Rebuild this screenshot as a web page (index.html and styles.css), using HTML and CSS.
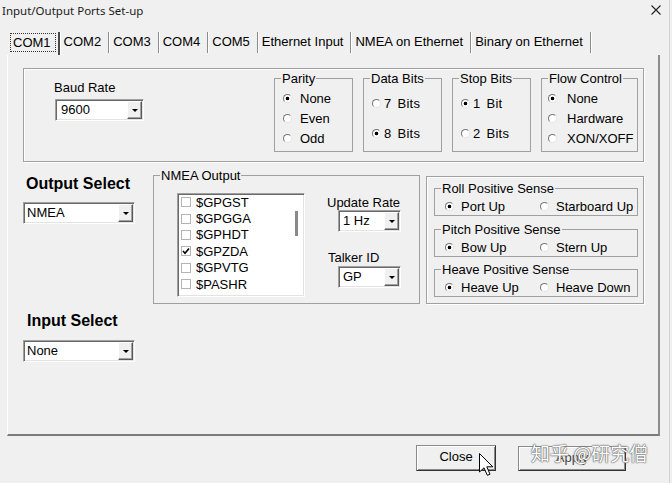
FILE: index.html
```html
<!DOCTYPE html>
<html>
<head>
<meta charset="utf-8">
<link rel="stylesheet" href="styles.css">
</head>
<body>
<div class="window">
  <div class="titlebar">
    <span class="title">Input/Output Ports Set-up</span>
    <svg class="xbtn" width="10" height="10" viewBox="0 0 10 10"><path d="M0.5 0.5 L9.5 9.5 M9.5 0.5 L0.5 9.5" stroke="#222" stroke-width="1.1" fill="none"/></svg>
  </div>

  <div class="tabs">
    <div class="tab sel"><span class="focus">COM1</span></div>
    <div class="tab">COM2</div>
    <div class="tab">COM3</div>
    <div class="tab">COM4</div>
    <div class="tab">COM5</div>
    <div class="tab">Ethernet Input</div>
    <div class="tab">NMEA on Ethernet</div>
    <div class="tab">Binary on Ethernet</div>
  </div>

  <div class="panel">
    <div class="group upper">
      <div class="baud">
        <div class="lbl">Baud Rate</div>
        <div class="combo baud-combo"><span class="val">9600</span><span class="dd"><span class="arrow"></span></span></div>
      </div>

      <fieldset class="fs parity">
        <legend>Parity</legend>
        <div class="radios">
          <div class="rb"><span class="radio on"></span>None</div>
          <div class="rb"><span class="radio"></span>Even</div>
          <div class="rb"><span class="radio"></span>Odd</div>
        </div>
      </fieldset>

      <fieldset class="fs databits">
        <legend>Data Bits</legend>
        <div class="radios two">
          <div class="rb"><span class="radio"></span>7 Bits</div>
          <div class="rb"><span class="radio on"></span>8 Bits</div>
        </div>
      </fieldset>

      <fieldset class="fs stopbits">
        <legend>Stop Bits</legend>
        <div class="radios two">
          <div class="rb"><span class="radio on"></span>1 Bit</div>
          <div class="rb"><span class="radio"></span>2 Bits</div>
        </div>
      </fieldset>

      <fieldset class="fs flow">
        <legend>Flow Control</legend>
        <div class="radios">
          <div class="rb"><span class="radio on"></span>None</div>
          <div class="rb"><span class="radio"></span>Hardware</div>
          <div class="rb"><span class="radio"></span>XON/XOFF</div>
        </div>
      </fieldset>
    </div>

    <div class="middle">
      <div class="leftcol">
        <div class="big out-lbl">Output Select</div>
        <div class="combo wide-combo"><span class="val">NMEA</span><span class="dd"><span class="arrow"></span></span></div>
        <div class="big in-lbl">Input Select</div>
        <div class="combo wide-combo in-combo"><span class="val">None</span><span class="dd"><span class="arrow"></span></span></div>
      </div>

      <fieldset class="fs nmea">
        <legend>NMEA Output</legend>
        <div class="nmea-body">
          <div class="listbox">
            <div class="items">
              <div class="item"><span class="cb"></span>$GPGST</div>
              <div class="item"><span class="cb"></span>$GPGGA</div>
              <div class="item"><span class="cb"></span>$GPHDT</div>
              <div class="item"><span class="cb"><svg width="8" height="8" viewBox="0 0 8 8"><path d="M1 4 L3 6.3 L7 1.5" stroke="#000" stroke-width="1.6" fill="none"/></svg></span>$GPZDA</div>
              <div class="item"><span class="cb"></span>$GPVTG</div>
              <div class="item"><span class="cb"></span>$PASHR</div>
              <div class="item"><span class="cb"></span>$PASHR_TSS</div>
            </div>
            <div class="scroll"><div class="thumb"></div></div>
          </div>
          <div class="nmea-right">
            <div class="lbl">Update Rate</div>
            <div class="combo small-combo"><span class="val">1 Hz</span><span class="dd"><span class="arrow"></span></span></div>
            <div class="lbl talker-lbl">Talker ID</div>
            <div class="combo small-combo talker-combo"><span class="val">GP</span><span class="dd"><span class="arrow"></span></span></div>
          </div>
        </div>
      </fieldset>

      <div class="group sense">
        <fieldset class="fs sfs">
          <legend>Roll Positive Sense</legend>
          <div class="row2">
            <div class="rb"><span class="radio on"></span>Port Up</div>
            <div class="rb"><span class="radio"></span>Starboard Up</div>
          </div>
        </fieldset>
        <fieldset class="fs sfs pitch">
          <legend>Pitch Positive Sense</legend>
          <div class="row2">
            <div class="rb"><span class="radio on"></span>Bow Up</div>
            <div class="rb"><span class="radio"></span>Stern Up</div>
          </div>
        </fieldset>
        <fieldset class="fs sfs heave">
          <legend>Heave Positive Sense</legend>
          <div class="row2">
            <div class="rb"><span class="radio on"></span>Heave Up</div>
            <div class="rb"><span class="radio"></span>Heave Down</div>
          </div>
        </fieldset>
      </div>
    </div>
  </div>

  <div class="buttons">
    <div class="btn close">Close</div>
    <div class="btn apply">Apply</div>
  </div>

  <div class="watermark">知乎 @研究僧</div>
  <svg class="cursor" width="15" height="24" viewBox="0 0 15 24"><path d="M0.5 0.5 L0.5 19 L5 14.8 L8.3 22.3 L11 21.2 L7.8 13.8 L13.8 13.8 Z" fill="#fff" stroke="#000" stroke-width="1"/></svg>
</div>
</body>
</html>
```

FILE: styles.css
```css
* { box-sizing: border-box; }
html, body { margin: 0; padding: 0; }
body {
  background: #f0f0f0;
  font-family: "Liberation Sans", Arial, sans-serif;
  font-size: 13px;
  color: #000;
}
.window {
  position: relative;
  width: 670px;
  height: 483px;
  overflow: hidden;
  background: #f0f0f0;
  border-right: 1px solid #d2d2d2;
}

/* title bar */
.titlebar {
  display: flex;
  justify-content: space-between;
  align-items: flex-start;
  height: 20px;
  padding: 3px 0 0 2px;
}
.title {
  font-family: "Noto Sans", sans-serif;
  font-size: 11.5px;
  line-height: 16px;
  color: #1b1b1b;
}
.xbtn { margin: 2px 8px 0 0; }

/* tabs */
.tabs {
  display: flex;
  align-items: flex-start;
  margin-top: 12px;
  height: 23px;
  padding-left: 9px;
}
.tab {
  height: 21px;
  line-height: 19px;
  padding: 0 7px 0 4px;
  border-right: 1px solid #8c8c8c;
  box-shadow: 1px 0 0 #fff;
  white-space: nowrap;
}
.tab.sel {
  height: 23px;
  padding: 1px 2px 0 1px;
  border-right: 2px solid #4a4a4a;
}
.focus {
  display: block;
  border: 1px dotted #333;
  padding: 0 4px 0 2px;
  line-height: 17px;
}

/* panel */
.panel {
  width: 653px;
  height: 381px;
  margin-left: 7px;
  border-left: 1px solid #fff;
  border-right: 2px solid #8c8c8c;
  border-bottom: 2px solid #7c7c7c;
  padding: 13px 0 0 15px;
}
.group {
  border: 1px solid #a0a0a0;
  box-shadow: inset 1px 1px 0 #fff, 1px 1px 0 #fff;
}
.upper {
  display: flex;
  align-items: flex-start;
  width: 621px;
  height: 94px;
}
.baud {
  width: 250px;
  flex: none;
  padding: 11px 0 0 30px;
}
.lbl { line-height: 15px; white-space: nowrap; }

/* fieldsets */
fieldset.fs {
  margin: 0;
  padding: 0;
  min-width: 0;
  border: 1px solid #a0a0a0;
  flex: none;
}
fieldset.fs legend {
  margin-left: 6px;
  padding: 0 1px;
  font-size: 13px;
  line-height: 13px;
  white-space: nowrap;
}
.upper fieldset.fs { margin-top: 3px; height: 80px; }
.upper fieldset.fs + fieldset.fs { margin-left: 10px; }
.parity, .databits, .stopbits { width: 79px; }
.flow { width: 97px; }

.radios { padding: 3px 0 0 8px; }
.radios.two { padding-top: 8px; display: flex; flex-direction: column; gap: 10px; }
.flow .radios { padding-left: 6px; }

.rb {
  display: flex;
  align-items: center;
  height: 20px;
  white-space: nowrap;
}
.radio {
  flex: none;
  width: 9px;
  height: 9px;
  border-radius: 50%;
  border: 1px solid;
  border-color: #777 #e4e4e4 #e4e4e4 #777;
  background: #fff;
  margin-right: 8px;
}
.radio.on { background: radial-gradient(circle, #000 0 1.6px, #fff 2.1px); }
.databits .radio, .stopbits .radio { margin-right: 3px; }
.databits .rb, .stopbits .rb { word-spacing: 2px; letter-spacing: 0.3px; }
.flow .radio { margin-right: 10px; }

/* combos */
.combo {
  display: flex;
  height: 22px;
  background: #fff;
  border: 1px solid;
  border-color: #a0a0a0 #fff #fff #a0a0a0;
  box-shadow: inset 1px 1px 0 #696969, inset -1px -1px 0 #e3e3e3;
  padding: 1px;
}
.combo .val {
  flex: 1;
  line-height: 18px;
  padding-left: 2px;
  white-space: nowrap;
}
.combo .dd {
  flex: none;
  width: 15px;
  background: #f0f0f0;
  border: 1px solid;
  border-color: #fff #5a5a5a #5a5a5a #fff;
  box-shadow: inset -1px -1px 0 #a0a0a0;
  display: flex;
  align-items: center;
  justify-content: center;
}
.arrow {
  width: 0;
  height: 0;
  border-left: 3px solid transparent;
  border-right: 3px solid transparent;
  border-top: 3px solid #000;
  margin-top: 1px;
}
.baud-combo { margin-top: 4px; margin-left: 1px; width: 89px; }
.baud-combo .val { padding-left: 4px; }

/* middle */
.middle {
  display: flex;
  align-items: flex-start;
  margin-top: 7px;
}
.leftcol {
  width: 112px;
  flex: none;
  padding-top: 7px;
  margin-right: 18px;
}
.big { font-weight: bold; font-size: 16px; line-height: 16px; white-space: nowrap; }
.out-lbl { padding-left: 3px; }
.in-lbl { padding-left: 4px; margin-top: 89px; }
.wide-combo { width: 112px; margin-top: 10px; }
.in-combo { margin-top: 11px; }

fieldset.nmea { width: 267px; height: 135px; }
.nmea-body { display: flex; align-items: flex-start; }
.listbox {
  display: flex;
  width: 128px;
  height: 104px;
  margin: 11px 0 0 23px;
  background: #fff;
  border: 1px solid;
  border-color: #a0a0a0 #fff #fff #a0a0a0;
  box-shadow: inset 1px 1px 0 #696969, inset -1px -1px 0 #e3e3e3;
  overflow: hidden;
}
.items { flex: 1; padding-left: 3px; overflow: hidden; }
.item {
  display: flex;
  align-items: center;
  height: 16.4px;
  white-space: nowrap;
}
.cb {
  flex: none;
  width: 10px;
  height: 10px;
  border: 1px solid #b4b4b4;
  background: #fff;
  margin-right: 5px;
  display: flex;
  align-items: center;
  justify-content: center;
}
.scroll { flex: none; width: 9px; padding-top: 17px; }
.thumb { width: 3px; height: 25px; background: #8a8a8a; }

.nmea-right { margin: 13px 0 0 22px; }
.small-combo { width: 63px; margin-left: 11px; }
.small-combo .val { padding-left: 3px; }
.talker-lbl { margin: 18px 0 0 1px; }
.talker-combo { margin-top: 1px; }

.sense {
  width: 218px;
  height: 128px;
  flex: none;
  margin: 7px 0 0 6px;
  padding: 5px 0 0 7px;
}
fieldset.sfs { width: 204px; height: 34px; }
.sense fieldset.pitch { margin-top: 7px; }
.sense fieldset.heave { margin-top: 6px; }
.row2 {
  display: grid;
  grid-template-columns: 95px auto;
  padding: 2px 0 0 10px;
}
.row2 .rb { height: 18px; }
.row2 .radio { margin-right: 7px; }

/* buttons */
.buttons {
  display: flex;
  justify-content: flex-end;
  align-items: flex-start;
  gap: 22px;
  padding-right: 43px;
  margin-top: 9px;
}
.btn {
  height: 26px;
  line-height: 22px;
  text-align: center;
  background: #f0f0f0;
  border: 1px solid;
  border-color: #8a8a8a #333 #333 #8a8a8a;
  box-shadow: inset 1px 1px 0 #fff, inset -1px -1px 0 #8a8a8a;
}
.close { width: 80px; }
.apply { width: 108px; height: 25px; margin-top: 1px; color: #444; }

.watermark {
  position: absolute;
  left: 531px;
  top: 440px;
  font-family: "Noto Sans CJK SC", sans-serif;
  font-size: 19px;
  line-height: 26px;
  color: #fff;
  text-shadow: 0 0 1px #555, 0 0 1px #555, 0 0 2px #888;
  white-space: nowrap;
}
.cursor {
  position: absolute;
  left: 479px;
  top: 453px;
}
```
